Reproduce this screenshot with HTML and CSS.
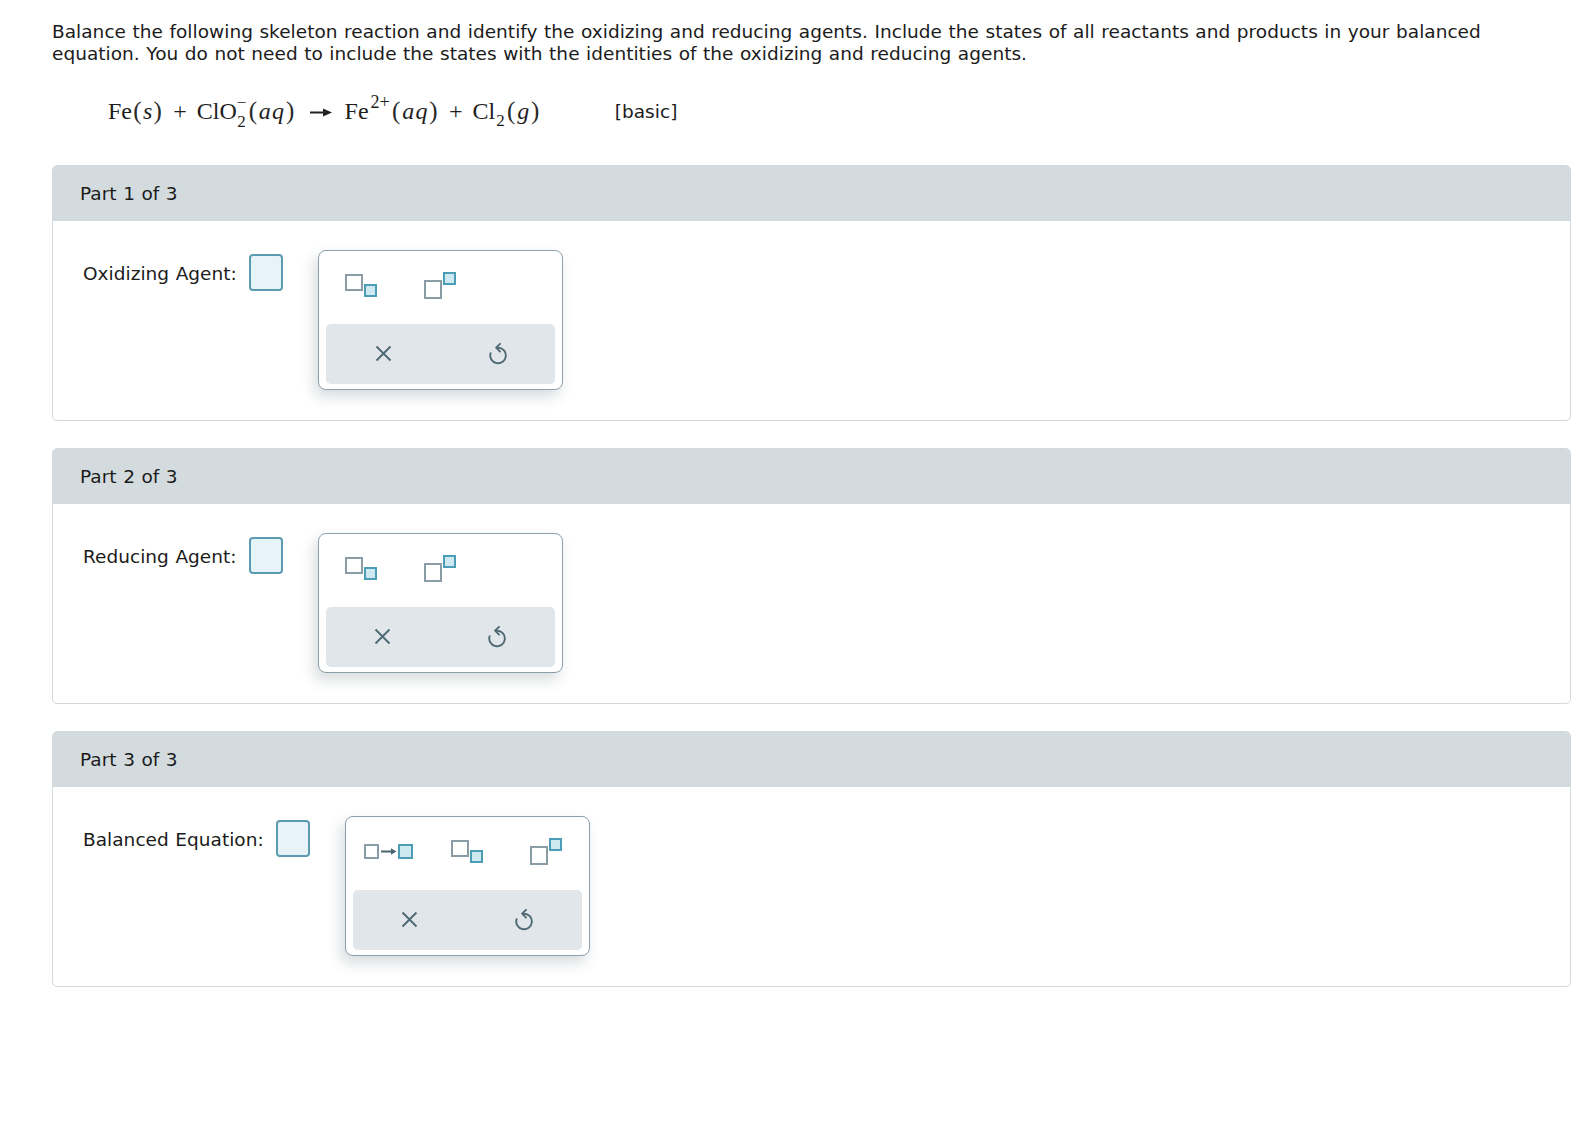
FILE: index.html
```html
<!DOCTYPE html>
<html lang="en">
<head>
<meta charset="utf-8">
<title>Balance the skeleton reaction</title>
<link rel="stylesheet" href="styles.css">
</head>
<body>
<div class="page">
  <p class="prompt">Balance the following skeleton reaction and identify the oxidizing and reducing agents. Include the states of all reactants and products in your balanced equation. You do not need to include the states with the identities of the oxidizing and reducing agents.</p>

  <div class="reaction">
    <span class="eq"><span>Fe</span><span class="par">(</span><i>s</i><span class="par">)</span><span class="op">+</span><span>ClO</span><span class="ss"><span class="ss-sup">−</span><span class="ss-sub">2</span></span><span class="par">(</span><i class="v">a</i><i class="v">q</i><span class="par">)</span><span class="arrow"><svg width="22" height="9" viewBox="0 0 22 9"><path d="M0 4.5 H15" stroke="#222" stroke-width="2"/><path d="M13 0.5 L22 4.5 L13 8.5 Z" fill="#222"/></svg></span><span>Fe</span><span class="sup">2+</span><span class="par">(</span><i class="v">a</i><i class="v">q</i><span class="par">)</span><span class="op">+</span><span>Cl</span><span class="sub">2</span><span class="par">(</span><i class="v">g</i><span class="par">)</span></span>
    <span class="cond">[basic]</span>
  </div>

  <section class="part">
    <div class="part-head">Part 1 of 3</div>
    <div class="part-body">
      <div class="field">
        <span class="label">Oxidizing Agent:</span>
        <span class="answer-box"></span>
      </div>
      <div class="palette">
        <div class="palette-top">
          <button class="tool" title="subscript">
            <svg width="33" height="24" viewBox="0 0 33 24"><rect x="1" y="1" width="16" height="15" fill="#fff" stroke="#8a9ca5" stroke-width="2"/><rect x="20" y="11" width="11" height="11" fill="#cfe9f1" stroke="#4b9db6" stroke-width="2"/></svg>
          </button>
          <button class="tool" title="superscript">
            <svg width="33" height="27" viewBox="0 0 33 27"><rect x="1" y="9" width="16" height="17" fill="#fff" stroke="#8a9ca5" stroke-width="2"/><rect x="20" y="1" width="11" height="11" fill="#cfe9f1" stroke="#4b9db6" stroke-width="2"/></svg>
          </button>
        </div>
        <div class="palette-bottom">
          <button class="action" title="clear">
            <svg width="17" height="17" viewBox="0 0 17 17"><path d="M1.5 1.5 L15.5 15.5 M15.5 1.5 L1.5 15.5" stroke="#4e6874" stroke-width="1.9" fill="none"/></svg>
          </button>
          <button class="action" title="undo">
            <svg width="18" height="23" viewBox="0 0 18 23"><path d="M9 5.7 A7.8 7.8 0 1 1 1.6 11.2" stroke="#4e6874" stroke-width="1.9" fill="none" stroke-linecap="round"/><path d="M11 1.8 L7.1 5.7 L11 9.6" stroke="#4e6874" stroke-width="1.9" fill="none" stroke-linecap="round" stroke-linejoin="round"/></svg>
          </button>
        </div>
      </div>
    </div>
  </section>

  <section class="part">
    <div class="part-head">Part 2 of 3</div>
    <div class="part-body">
      <div class="field">
        <span class="label">Reducing Agent:</span>
        <span class="answer-box"></span>
      </div>
      <div class="palette">
        <div class="palette-top">
          <button class="tool" title="subscript">
            <svg width="33" height="24" viewBox="0 0 33 24"><rect x="1" y="1" width="16" height="15" fill="#fff" stroke="#8a9ca5" stroke-width="2"/><rect x="20" y="11" width="11" height="11" fill="#cfe9f1" stroke="#4b9db6" stroke-width="2"/></svg>
          </button>
          <button class="tool" title="superscript">
            <svg width="33" height="27" viewBox="0 0 33 27"><rect x="1" y="9" width="16" height="17" fill="#fff" stroke="#8a9ca5" stroke-width="2"/><rect x="20" y="1" width="11" height="11" fill="#cfe9f1" stroke="#4b9db6" stroke-width="2"/></svg>
          </button>
        </div>
        <div class="palette-bottom">
          <button class="action" title="clear">
            <svg width="17" height="17" viewBox="0 0 17 17"><path d="M1.5 1.5 L15.5 15.5 M15.5 1.5 L1.5 15.5" stroke="#4e6874" stroke-width="1.9" fill="none"/></svg>
          </button>
          <button class="action" title="undo">
            <svg width="18" height="23" viewBox="0 0 18 23"><path d="M9 5.7 A7.8 7.8 0 1 1 1.6 11.2" stroke="#4e6874" stroke-width="1.9" fill="none" stroke-linecap="round"/><path d="M11 1.8 L7.1 5.7 L11 9.6" stroke="#4e6874" stroke-width="1.9" fill="none" stroke-linecap="round" stroke-linejoin="round"/></svg>
          </button>
        </div>
      </div>
    </div>
  </section>

  <section class="part">
    <div class="part-head">Part 3 of 3</div>
    <div class="part-body">
      <div class="field">
        <span class="label">Balanced Equation:</span>
        <span class="answer-box"></span>
      </div>
      <div class="palette">
        <div class="palette-top">
          <button class="tool" title="reaction arrow">
            <svg width="49" height="15" viewBox="0 0 49 15"><rect x="1" y="1" width="13" height="13" fill="#fff" stroke="#8a9ca5" stroke-width="2"/><path d="M17 7.5 H28" stroke="#4a6673" stroke-width="2"/><path d="M27 4.2 L32.5 7.5 L27 10.8 Z" fill="#4a6673"/><rect x="35" y="1" width="13" height="13" fill="#cfe9f1" stroke="#4b9db6" stroke-width="2"/></svg>
          </button>
          <button class="tool" title="subscript">
            <svg width="33" height="24" viewBox="0 0 33 24"><rect x="1" y="1" width="16" height="15" fill="#fff" stroke="#8a9ca5" stroke-width="2"/><rect x="20" y="11" width="11" height="11" fill="#cfe9f1" stroke="#4b9db6" stroke-width="2"/></svg>
          </button>
          <button class="tool" title="superscript">
            <svg width="33" height="27" viewBox="0 0 33 27"><rect x="1" y="9" width="16" height="17" fill="#fff" stroke="#8a9ca5" stroke-width="2"/><rect x="20" y="1" width="11" height="11" fill="#cfe9f1" stroke="#4b9db6" stroke-width="2"/></svg>
          </button>
        </div>
        <div class="palette-bottom">
          <button class="action" title="clear">
            <svg width="17" height="17" viewBox="0 0 17 17"><path d="M1.5 1.5 L15.5 15.5 M15.5 1.5 L1.5 15.5" stroke="#4e6874" stroke-width="1.9" fill="none"/></svg>
          </button>
          <button class="action" title="undo">
            <svg width="18" height="23" viewBox="0 0 18 23"><path d="M9 5.7 A7.8 7.8 0 1 1 1.6 11.2" stroke="#4e6874" stroke-width="1.9" fill="none" stroke-linecap="round"/><path d="M11 1.8 L7.1 5.7 L11 9.6" stroke="#4e6874" stroke-width="1.9" fill="none" stroke-linecap="round" stroke-linejoin="round"/></svg>
          </button>
        </div>
      </div>
    </div>
  </section>
</div>
</body>
</html>
```

FILE: styles.css
```css
html, body {
  margin: 0;
  padding: 0;
  background: #ffffff;
}

body {
  font-family: "DejaVu Sans", Verdana, sans-serif;
  font-size: 18.5px;
  letter-spacing: 0.03px;
  color: #1b1b1b;
  word-spacing: 0.6px;
}

.page {
  padding: 21px 19px 40px 52px;
}

.prompt {
  margin: 0;
  max-width: 1470px;
  line-height: 22.3px;
}

.reaction {
  display: flex;
  align-items: center;
  height: 34px;
  margin: 29px 0 36px 56px;
}

.eq {
  font-family: "Liberation Serif", "Times New Roman", serif;
  font-size: 24px;
  color: #1e1e1e;
  white-space: nowrap;
  word-spacing: 0;
  letter-spacing: 0;
  line-height: 34px;
}

.eq i {
  font-style: italic;
}

.eq .v {
  padding: 0 0.6px;
}

.eq .par {
  font-size: 25px;
  color: #2a2a2a;
  padding: 0 1.3px;
}

.eq .op {
  display: inline-block;
  margin: 0 10px;
}

.eq .ss {
  display: inline-block;
  vertical-align: -8px;
  font-size: 17px;
  line-height: 19px;
  text-align: center;
  padding: 0 1px 0 0;
}

.eq .ss-sup,
.eq .ss-sub {
  display: block;
}

.eq .sup {
  font-size: 18px;
  vertical-align: 11px;
  padding: 0 1px 0 2px;
}

.eq .sub {
  font-size: 17px;
  vertical-align: -7px;
  padding: 0 1px;
}

.eq .arrow {
  display: inline-block;
  margin: 0 13px 0 14px;
  vertical-align: 2px;
}

.cond {
  margin-left: 74px;
}

.part {
  height: 256px;
  box-sizing: border-box;
  border: 1px solid #d3dadd;
  border-radius: 5px;
  overflow: hidden;
  margin-bottom: 27px;
}

.part-head {
  height: 55px;
  display: flex;
  align-items: center;
  padding-left: 27px;
  background: #d4dbdf;
}

.part-body {
  display: flex;
  align-items: flex-start;
  padding: 29px 0 0 30px;
}

.field {
  display: flex;
  align-items: center;
  margin-top: 4px;
}

.label {
  line-height: 22px;
  padding-top: 3px;
}

.answer-box {
  display: inline-block;
  width: 34px;
  height: 37px;
  box-sizing: border-box;
  margin-left: 12px;
  border: 2px solid #5b9bb0;
  border-radius: 4px;
  background: #e6f3f8;
}

.palette {
  width: 245px;
  height: 140px;
  box-sizing: border-box;
  margin-left: 35px;
  padding: 0 7px 5px;
  border: 1px solid #8aa0aa;
  border-radius: 8px;
  background: #ffffff;
  box-shadow: -4px 7px 14px rgba(40, 60, 70, 0.18);
  display: flex;
  flex-direction: column;
}

.palette-top {
  display: flex;
  height: 73px;
  margin: 0 -4px;
  box-sizing: border-box;
  padding-bottom: 3px;
}

.tool {
  width: 79px;
  border: 0;
  padding: 0;
  background: transparent;
  display: flex;
  align-items: center;
  justify-content: center;
}

.palette-bottom {
  display: flex;
  height: 60px;
  border-radius: 5px;
  background: #e0e6e9;
}

.action {
  flex: 1;
  border: 0;
  padding: 0;
  background: transparent;
  display: flex;
  align-items: center;
  justify-content: center;
}

button svg {
  display: block;
}
```
